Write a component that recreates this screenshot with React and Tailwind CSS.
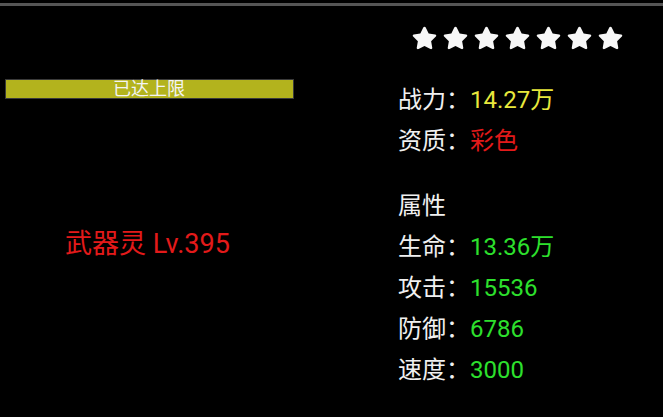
import React from 'react';

const STAR_PATH =
  'M12 1.6c.5 0 .9.3 1.1.7l2.6 5.3 5.8.8c.9.1 1.3 1.2.6 1.9l-4.2 4.1 1 5.8c.2.9-.8 1.6-1.6 1.2L12 18.6l-5.3 2.8c-.8.4-1.8-.3-1.6-1.2l1-5.8-4.2-4.1c-.7-.7-.3-1.8.6-1.9l5.8-.8 2.6-5.3c.2-.4.6-.7 1.1-.7z';

function Star() {
  return (
    <svg viewBox="0 0 24 24" className="w-[27px] h-[27px]">
      <path d={STAR_PATH} fill="#f7f7f7" />
    </svg>
  );
}

function Row({ label, value, color }) {
  return (
    <div className="h-[41px] leading-[41px] text-[24px] whitespace-nowrap">
      <span className="text-[#f0f0f0]">{label}：</span>
      <span style={{ color }}>{value}</span>
    </div>
  );
}

export default function App() {
  const font = { fontFamily: "Roboto, 'Noto Sans CJK SC', sans-serif" };

  return (
    <div className="w-[663px] h-[417px] bg-black flex flex-col overflow-hidden" style={font}>
      <div className="mt-[3px] h-[3px] bg-[#555555]" />

      <div className="flex flex-1">
        {/* left */}
        <div className="w-[295px] pt-[73px] flex flex-col items-center">
          <div className="ml-[3px] w-[289px] h-[20px] border border-[#3a3a3a] bg-[#b3b31d] flex items-center justify-center">
            <span className="text-[18px] leading-none text-[#f4f4f4]">已达上限</span>
          </div>
          <div className="mt-[128px] text-[27px] leading-[34px] text-[#e31a1a] whitespace-nowrap">
            武器灵 Lv.395
          </div>
        </div>

        {/* right */}
        <div className="ml-[103px] flex flex-col">
          <div className="pt-[19px] pl-[13px] flex gap-[4px]">
            {Array.from({ length: 7 }).map((_, i) => (
              <Star key={i} />
            ))}
          </div>
          <div className="mt-[28px]">
            <Row label="战力" value="14.27万" color="#e8e83c" />
            <Row label="资质" value="彩色" color="#e31a1a" />
          </div>
          <div className="mt-[24px]">
            <div className="h-[41px] leading-[41px] text-[24px] text-[#f0f0f0]">属性</div>
            <Row label="生命" value="13.36万" color="#2de02d" />
            <Row label="攻击" value="15536" color="#2de02d" />
            <Row label="防御" value="6786" color="#2de02d" />
            <Row label="速度" value="3000" color="#2de02d" />
          </div>
        </div>
      </div>
    </div>
  );
}
